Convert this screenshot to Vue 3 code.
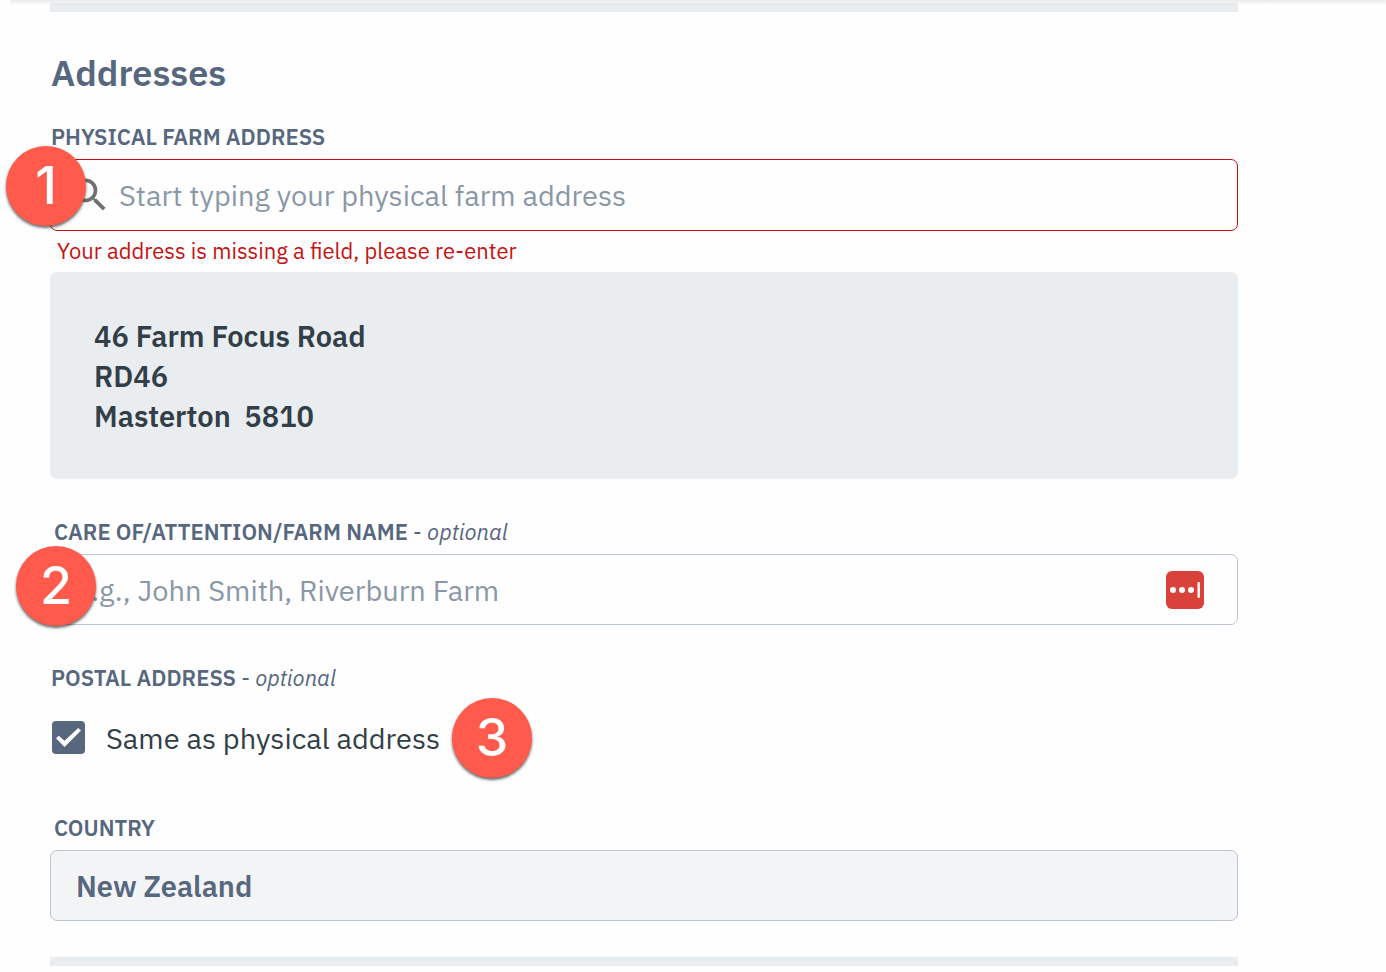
<template>
  <div class="page">
    <form class="section" @submit.prevent>
      <h2>Addresses</h2>

      <div class="group">
        <label class="label" for="physical">PHYSICAL FARM ADDRESS</label>
        <div class="field error">
          <svg class="search" viewBox="0 0 24 24" aria-hidden="true">
            <path d="M15.5 14h-.79l-.28-.27A6.47 6.47 0 0 0 16 9.5 6.5 6.5 0 1 0 9.5 16c1.61 0 3.09-.59 4.23-1.57l.27.28v.79l5 4.99L20.49 19l-4.99-5zm-6 0a4.5 4.5 0 1 1 0-9 4.5 4.5 0 0 1 0 9z" />
          </svg>
          <input
            id="physical"
            v-model="physical"
            type="text"
            placeholder="Start typing your physical farm address"
            aria-describedby="physical-error"
          />
          <span class="badge one">1</span>
        </div>
        <p id="physical-error" class="message">Your address is missing a field, please re-enter</p>
        <address>
          <span v-for="line in addressLines" :key="line">{{ line }}</span>
        </address>
      </div>

      <div class="group">
        <label class="label indent" for="careof">CARE OF/ATTENTION/FARM NAME <span>- <em>optional</em></span></label>
        <div class="field plain">
          <input id="careof" v-model="careOf" type="text" placeholder="e.g., John Smith, Riverburn Farm" />
          <button type="button" class="autofill" aria-label="Fill in">
            <svg viewBox="0 0 38 38" aria-hidden="true">
              <circle cx="7" cy="19" r="3" />
              <circle cx="16" cy="19" r="3" />
              <circle cx="25" cy="19" r="3" />
              <rect x="31.5" y="11" width="2.4" height="16" rx="1" />
            </svg>
          </button>
          <span class="badge two">2</span>
        </div>
      </div>

      <fieldset class="group">
        <legend class="label">POSTAL ADDRESS <span>- <em>optional</em></span></legend>
        <div class="check">
          <input id="same" v-model="same" type="checkbox" />
          <label for="same">Same as physical address</label>
          <span class="badge three">3</span>
        </div>
      </fieldset>

      <div class="group">
        <label class="label indent" for="country">COUNTRY</label>
        <div class="field plain readonly">
          <input id="country" :value="country" type="text" readonly />
        </div>
      </div>
    </form>
  </div>
</template>

<script setup>
import { ref } from 'vue';

const physical = ref('');
const careOf = ref('');
const same = ref(true);
const country = ref('New Zealand');

const addressLines = ['46 Farm Focus Road', 'RD46', 'Masterton\u00a0 5810'];
</script>

<style>
body {
  background: #fefefe;
}
</style>

<style scoped>
.page {
  position: relative;
  padding: 3px 148px 0 50px;
  font-family: "IBM Plex Sans", Roboto, sans-serif;
  color: #56677e;
}

/* shadow of the bar scrolled above the form */
.page::before {
  content: "";
  position: absolute;
  top: 0;
  left: 10px;
  right: 0;
  height: 5px;
  background: linear-gradient(rgba(0, 0, 0, 0.08), rgba(0, 0, 0, 0));
}

.section {
  border-top: 9px solid #e9edf0;
  border-bottom: 9px solid #e9edf0;
  padding: 40px 0 36px;
}

h2 {
  margin: 0 0 29px 1px;
  font-size: 36px;
  line-height: 42px;
  font-weight: 600;
}

.group {
  margin: 0 0 39px;
  padding: 0;
  border: none;
}

.group:last-child {
  margin-bottom: 0;
}

.label {
  display: block;
  margin-bottom: 9px;
  padding: 0 1px;
  font-size: 22px;
  line-height: 27px;
  font-weight: 600;
}

.label.indent {
  padding-left: 4px;
}

.label span {
  font-weight: 400;
}

.field {
  position: relative;
  display: flex;
  align-items: center;
  height: 72px;
  box-sizing: border-box;
  border: 1px solid #bcc5d2;
  border-radius: 7px;
  padding: 0 33px 0 25px;
}

.field.plain {
  height: 71px;
}

.field.error {
  border-color: #c70f0f;
  padding-left: 17px;
}

.field.readonly {
  background: #f3f4f6;
}

.field input {
  flex: 1;
  min-width: 0;
  border: none;
  outline: none;
  padding: 0;
  background: transparent;
  font: inherit;
  font-size: 29px;
  line-height: 40px;
  color: #56677e;
}

.field input::placeholder {
  color: #8a97a7;
  opacity: 1;
}

.field.readonly input {
  font-weight: 600;
}

.search {
  width: 44px;
  height: 44px;
  margin-right: 7px;
  fill: #717171;
}

.message {
  margin: 6px 0 7px 7px;
  font-size: 22px;
  line-height: 28px;
  color: #c41313;
}

address {
  display: flex;
  flex-direction: column;
  padding: 44px 44px 43px;
  border-radius: 7px;
  background: #e9edf0;
  color: #323e48;
  font-style: normal;
  font-size: 29px;
  line-height: 40px;
  font-weight: 600;
}

.autofill {
  width: 38px;
  height: 38px;
  padding: 0;
  border: none;
  border-radius: 6px;
  background: #d9413b;
  cursor: pointer;
}

.autofill svg {
  display: block;
  fill: #ffffff;
}

.check {
  display: flex;
  align-items: center;
  height: 75px;
  padding-left: 2px;
  color: #323e48;
  font-size: 29px;
  line-height: 40px;
}

.check input {
  appearance: none;
  width: 33px;
  height: 33px;
  margin: 0 21px 0 0;
  border-radius: 4px;
  background: #56677e;
  display: grid;
  place-items: center;
}

.check input:checked::before {
  content: "";
  width: 25px;
  height: 19px;
  background: #ffffff;
  clip-path: polygon(0 54%, 11% 41%, 34% 67%, 89% 0, 100% 13%, 34% 100%);
}

.badge {
  display: flex;
  align-items: center;
  justify-content: center;
  flex: none;
  width: 80px;
  height: 80px;
  border-radius: 50%;
  background: #ff5a4c;
  box-shadow: 0 2px 3px rgba(0, 0, 0, 0.6);
  color: #ffffff;
  font-family: Inter, Helvetica, sans-serif;
  font-size: 52px;
  line-height: 80px;
  font-weight: 500;
}

.one {
  position: absolute;
  left: -45px;
  top: -14px;
}

.two {
  position: absolute;
  left: -35px;
  top: -9px;
}

.three {
  margin-left: 12px;
}
</style>
